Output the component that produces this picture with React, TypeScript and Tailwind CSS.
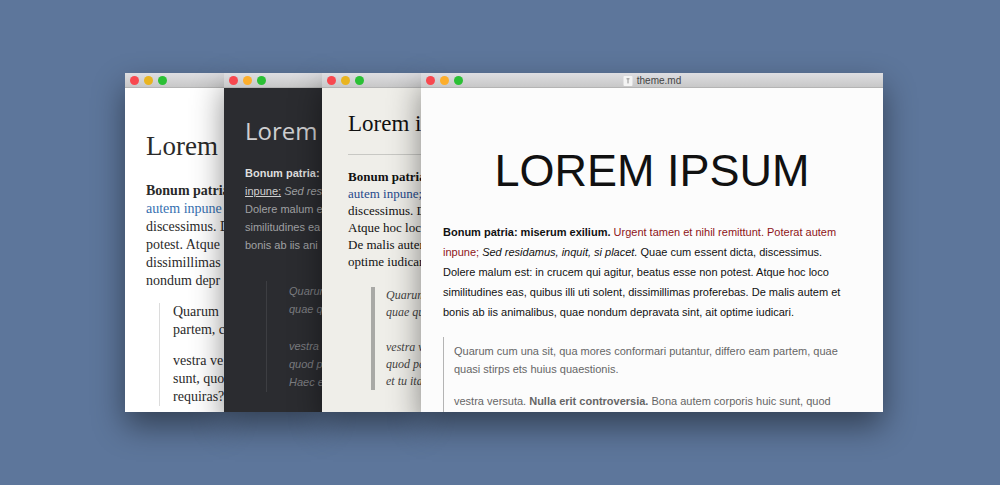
import type { ReactNode } from 'react';
import clsx from 'clsx';

type WindowProps = {
  className: string;
  title?: string;
  amber?: boolean;
  children: ReactNode;
};

function DocIcon() {
  return (
    <svg viewBox="0 0 10 10" className="size-[10px]" aria-hidden="true">
      <rect x="0.5" y="0" width="9" height="10" rx="1" fill="#f4f4f4" />
      <path d="M3.5 2.8h3M5 2.8v4.6" stroke="#888" strokeWidth="0.9" fill="none" />
    </svg>
  );
}

function ThemeWindow({ className, title, amber, children }: WindowProps) {
  return (
    <section
      className={clsx(
        'relative flex min-w-0 flex-col overflow-hidden shadow-[0_14px_30px_rgba(0,0,0,0.45)]',
        className,
      )}
    >
      <header className="grid h-[15px] shrink-0 grid-cols-[1fr_auto_1fr] items-center border-b border-[#b4b4b4] bg-linear-to-b from-[#dedee2] to-[#c8c8c8] px-[5px]">
        <div className="flex gap-[5px]">
          <button type="button" aria-label="Close" className="size-[9px] shrink-0 rounded-full bg-[#f8484f]" />
          <button
            type="button"
            aria-label="Minimize"
            className={clsx('size-[9px] shrink-0 rounded-full', amber ? 'bg-[#fdae2c]' : 'bg-[#e9b420]')}
          />
          <button type="button" aria-label="Zoom" className="size-[9px] shrink-0 rounded-full bg-[#2bc035]" />
        </div>
        {title && (
          <div className="flex items-center gap-1 pt-px font-['Liberation_Sans',sans-serif] text-[10px] leading-[13px] text-[#444]">
            <DocIcon />
            {title}
          </div>
        )}
      </header>
      <div className="min-h-0 flex-1 overflow-hidden">{children}</div>
    </section>
  );
}

// the three windows at the back only show their left edge, so lines are broken by hand
function Lines({ children }: { children: ReactNode }) {
  return <p className="whitespace-nowrap">{children}</p>;
}

function Newsprint() {
  return (
    <article className="pt-[42px] pl-[21px] font-['Liberation_Serif',serif] text-[14px] leading-[18px] text-[#2a2a2a]">
      <h1 className="mb-[20px] text-[27px] leading-[32px] whitespace-nowrap">Lorem</h1>
      <Lines>
        <strong>Bonum patria</strong><br />
        <a href="#" className="text-[#3670b0]">autem inpune</a><br />
        discessimus. D<br />
        potest. Atque<br />
        dissimillimas<br />
        nondum depr
      </Lines>
      <blockquote className="mt-[13px] ml-[13px] flex flex-col gap-[13px] border-l border-[#dcdcdc] pl-[13px]">
        <Lines>Quarum<br />partem, c</Lines>
        <Lines>vestra ve<br />sunt, quo<br />requiras?</Lines>
      </blockquote>
    </article>
  );
}

function Night() {
  return (
    <article className="pt-[27px] pl-[21px] font-['Liberation_Sans',sans-serif] text-[11px] leading-[18px] text-[#a0a1a3]">
      <h1 className="mb-[17px] font-['Open_Sans',sans-serif] text-[24px] leading-[32px] whitespace-nowrap text-[#cfcfd0]">Lorem</h1>
      <Lines>
        <strong className="text-[#dedede]">Bonum patria:</strong><br />
        <a href="#" className="text-[#d0d0d0] underline">inpune;</a> <em>Sed res</em><br />
        Dolere malum e<br />
        similitudines ea<br />
        bonis ab iis ani
      </Lines>
      <blockquote className="mt-[27px] ml-[21px] flex flex-col gap-[19px] border-l border-[#3d3e42] py-px pl-[22px] text-[#7c7d80] italic">
        <Lines>Quarum<br />quae q</Lines>
        <Lines>vestra<br />quod p<br />Haec e</Lines>
      </blockquote>
    </article>
  );
}

function Paper() {
  return (
    <article className="pt-[22px] pl-[26px] font-['Liberation_Serif',serif] text-[13px] leading-[17px] text-[#111]">
      <h1 className="mb-[13px] border-b border-[#c8c8c4] pb-[16px] text-[23px] leading-[28px] whitespace-nowrap">Lorem i</h1>
      <Lines>
        <strong>Bonum patria</strong><br />
        <a href="#" className="text-[#1f4a8c]">autem inpune;</a><br />
        discessimus. D<br />
        Atque hoc loco<br />
        De malis autem<br />
        optime iudicar
      </Lines>
      <blockquote className="mt-[17px] ml-[23px] flex flex-col gap-[18px] border-l-4 border-[#a9a9a6] pl-[11px] text-[12px] text-[#444] italic">
        <Lines>Quarum<br />quae qu</Lines>
        <Lines>vestra v<br />quod pe<br />et tu ita</Lines>
      </blockquote>
    </article>
  );
}

function Gothic() {
  return (
    <article className="px-[22px] pt-[55px] font-['Liberation_Sans',sans-serif] text-[11px] leading-[20px] text-[#111]">
      <h1 className="mb-[23px] text-center text-[45px] leading-[56px] uppercase">Lorem ipsum</h1>
      <p className="pr-3">
        <strong>Bonum patria: miserum exilium.</strong>{' '}
        <a href="#" className="text-[#8e1518]">Urgent tamen et nihil remittunt. Poterat autem inpune;</a>{' '}
        <em>Sed residamus, inquit, si placet.</em> Quae cum essent dicta, discessimus. Dolere malum est: in
        crucem qui agitur, beatus esse non potest. Atque hoc loco similitudines eas, quibus illi uti solent,
        dissimillimas proferebas. De malis autem et bonis ab iis animalibus, quae nondum depravata sint, ait
        optime iudicari.
      </p>
      <blockquote className="mt-[15px] flex flex-col gap-[14px] border-l border-[#b4b4b4] pt-[5px] pb-[22px] pl-[10px] leading-[18px] text-[#666]">
        <p>Quarum cum una sit, qua mores conformari putantur, differo eam partem, quae quasi stirps ets huius quaestionis.</p>
        <p>vestra versuta. <strong>Nulla erit controversia.</strong> Bona autem corporis huic sunt, quod</p>
      </blockquote>
    </article>
  );
}

export default function App() {
  return (
    <main className="grid h-screen grid-cols-[99fr_98fr_99fr_462fr] grid-rows-[minmax(0,1fr)] overflow-hidden bg-[#5d769b] py-[73px] pr-[117px] pl-[125px]">
      <ThemeWindow className="bg-white">
        <Newsprint />
      </ThemeWindow>
      <ThemeWindow className="bg-[#2b2c30]" amber>
        <Night />
      </ThemeWindow>
      <ThemeWindow className="bg-[#efeee9]">
        <Paper />
      </ThemeWindow>
      <ThemeWindow className="bg-[#fcfcfc]" title="theme.md" amber>
        <Gothic />
      </ThemeWindow>
    </main>
  );
}
